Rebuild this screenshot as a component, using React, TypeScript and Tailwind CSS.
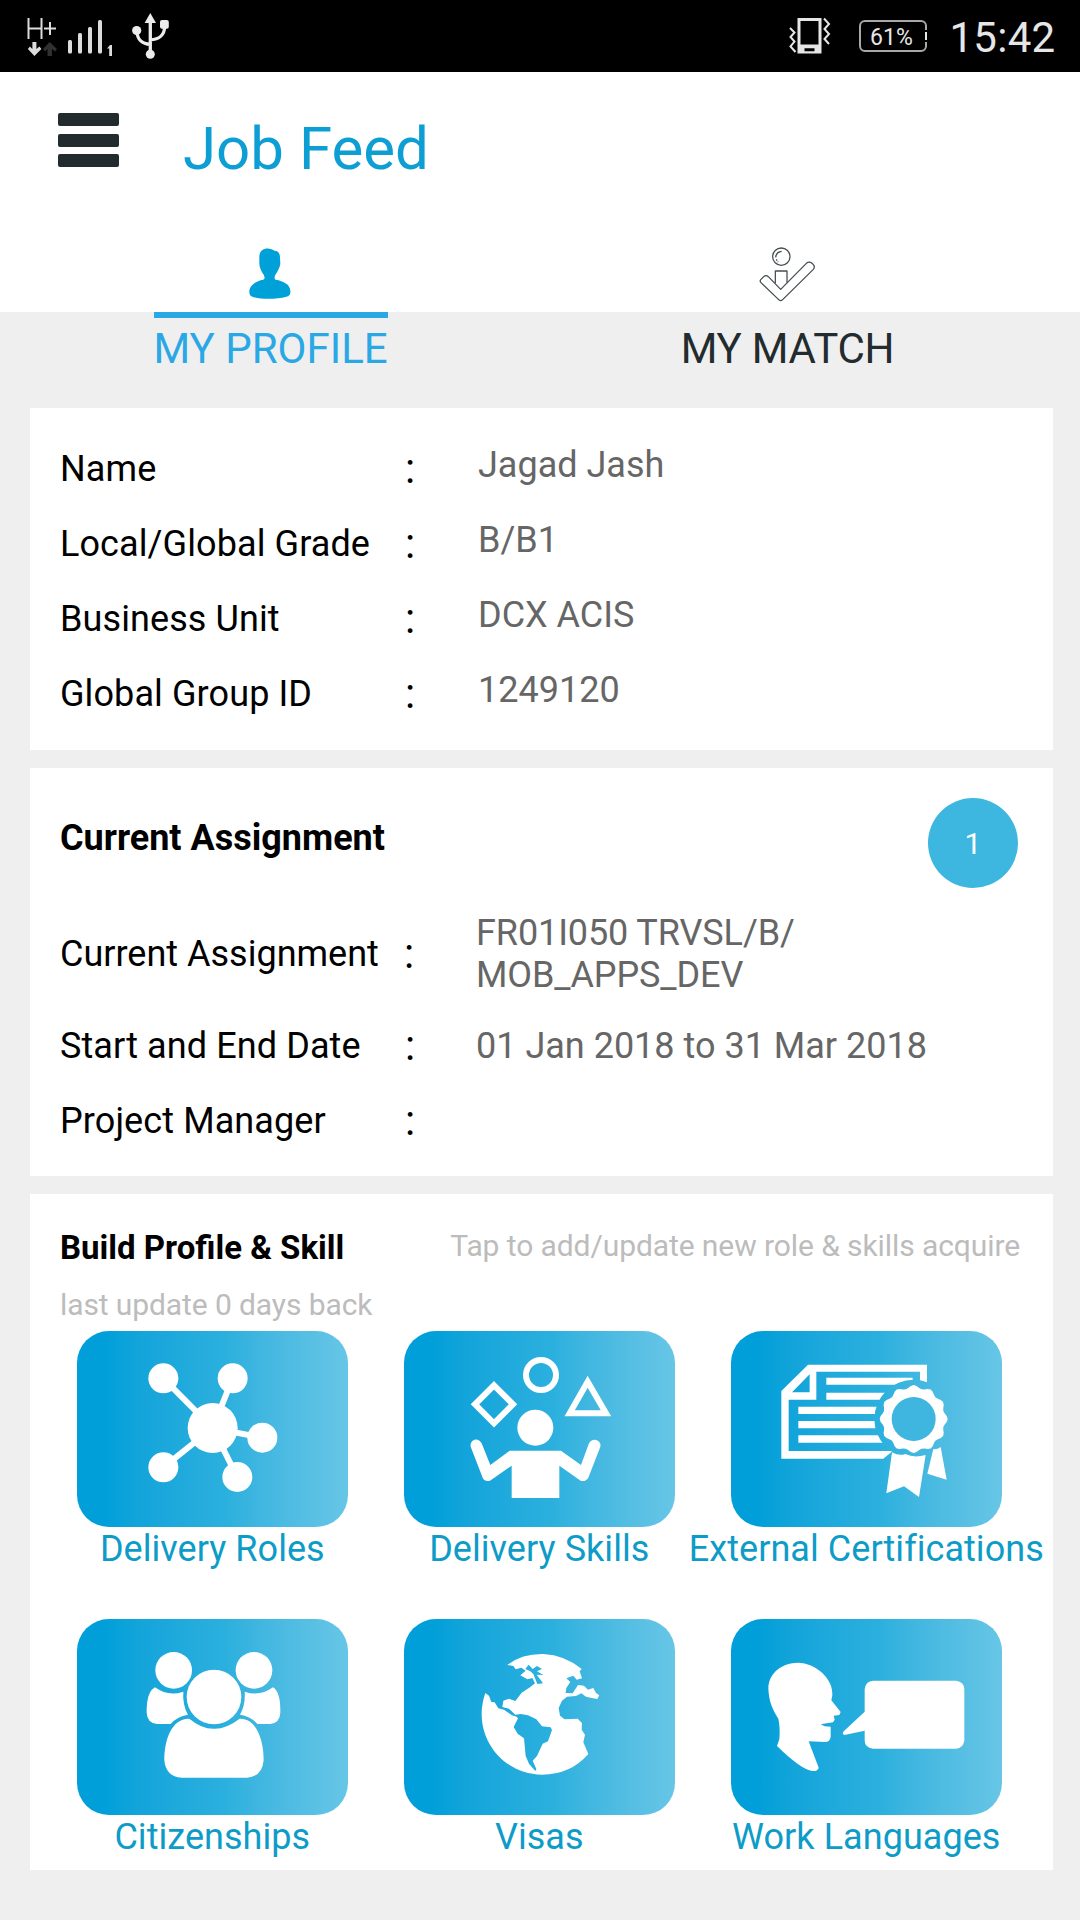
import type { ReactNode } from 'react';

const profile = [
    { label: 'Name', value: 'Jagad Jash' },
    { label: 'Local/Global Grade', value: 'B/B1' },
    { label: 'Business Unit', value: 'DCX ACIS' },
    { label: 'Global Group ID', value: '1249120' },
];

function StatusBar() {
    return (
        <div className="flex h-[72px] items-center bg-black text-[#e6e6e6]">
            <svg width="180" height="72" viewBox="0 0 180 72" fill="#dcdcdc">
                {/* network type */}
                <g stroke="#dcdcdc" strokeWidth="2" fill="none">
                    <path d="M28.5 18v21M41.5 18v21M28.5 28.500h13M44 28.500h12M50 22v13" />
                </g>
                <path d="M32.400 42h4v7l3-2.500 2 2.500-7 7-6.500-7 2-2.500 2.500 2.500z" />
                <path d="M47.500 56h4.500v-7l3 2.500 2-2.500-7.300-7-6.700 7 2 2.500 2.500-2.500z" fill="#303030" />
                <rect x="68" y="40" width="4" height="13.500" rx="1.500" />
                <rect x="78" y="33" width="4" height="20.500" rx="1.500" />
                <rect x="88" y="27" width="4" height="26.500" rx="1.500" />
                <rect x="98" y="20" width="4" height="33.500" rx="1.500" />
                <path d="M107 48.500l3-3.500h2v11h-2.800v-7.500z" />
                {/* usb */}
                <g fill="#ececec">
                    <path d="M150.300 13l5.700 10h-11.400z" />
                    <circle cx="136.700" cy="30.500" r="4.600" />
                    <rect x="160" y="20" width="8.800" height="8.800" rx="2" />
                    <circle cx="150.300" cy="54.200" r="4.500" />
                    <path
                        d="M150.300 20v34M137 31c0 8 5 13 13.300 13.300M164.500 27c0 7.500-5 12.500-14.200 12.800"
                        fill="none"
                        stroke="#ececec"
                        strokeWidth="3.300"
                    />
                </g>
            </svg>
            <div className="flex-1" />
            {/* vibrate */}
            <svg width="42" height="38" viewBox="0 0 42 38" className="mr-[28px]" fill="none" stroke="#e6e6e6">
                <path d="M8.500 1h24v35.500h-24z" fill="#e6e6e6" stroke="none" />
                <path d="M11.500 4h18v23.500h-18zM15.500 31.200h10v3h-10z" fill="#000" stroke="none" />
                <path d="M1 11l4.500 4.500-4 4.500 4 4.500-4 5 5 5.500" strokeWidth="2" />
                <path d="M35 1.500l5 5.500-4.500 5 4.500 5-4.500 5 4.500 5" strokeWidth="2" />
            </svg>
            <div className="relative mr-[22px] flex h-[32px] w-[68px] items-center justify-center rounded-[6px] border-2 border-[#a8a8a8] pr-[4px] pt-[3px] text-[23px] leading-none">
                61%
                <span className="absolute right-[-2px] top-[8px] h-[12px] w-[2px] border-y-2 border-black bg-[#e6e6e6]" />
            </div>
            <span className="pr-[24.5px] pt-[4px] text-[42px] leading-none tracking-[0.3px]">15:42</span>
        </div>
    );
}

function UserIcon() {
    return (
        <svg width="42" height="51" viewBox="356 55 126 153" fill="#00a0d8">
            <path d="M387 80C388 62 402 55 416 57C424 58 428 60 432 63C443 63 449 70 449 84L450 103C448 115 441 126 435 136C432 142 432 148 436 150C460 154 479 164 480 183C481 196 476 199 468 201C440 209 396 210 368 202C360 199 357 196 357 185C358 166 378 154 398 150C404 148 404 143 400 135C393 125 388 115 387 103z" />
        </svg>
    );
}

function MatchIcon() {
    return (
        <svg width="57" height="55" viewBox="298 50 171 165" fill="none" stroke="#454d50" strokeWidth="3.8" strokeLinejoin="round">
            <circle cx="365" cy="79" r="26" />
            <path d="M348 81C349 70 355 64 366 63M350 87l2 4M354 94l2 1" strokeWidth="4" />
            <path d="M347 158V122H382V157" />
            <path d="M304 147L312 139Q319 133 326 139L363 177L440 99Q448 92 456 98L461 103Q467 110 461 117L369 208Q363 214 357 208L304 157Q299 152 304 147z" />
        </svg>
    );
}

function Row({ label, value, raised }: { label: string; value: string; raised?: boolean }) {
    return (
        <div className="flex h-[75px] items-center">
            <span className="w-[345px] tracking-[0.1px] text-black">{label}</span>
            <span className="w-[71px] text-[42px] leading-[48px] text-black">:</span>
            <span className={raised ? 'pb-2 pl-[2px] text-[#666]' : 'text-[#666]'}>{value}</span>
        </div>
    );
}

function Tile({ label, origin, children }: { label: string; origin: string; children: ReactNode }) {
    return (
        <div className="flex h-[288px] flex-col items-center">
            <div className="h-[196px] w-[271px] rounded-[32px] bg-linear-to-r from-[#009fd9] from-10% via-[#2bb0de] via-55% to-[#67c6e6]">
                <svg width="271" height="196" viewBox={origin} fill="#fff">
                    {children}
                </svg>
            </div>
            <span className="whitespace-nowrap pr-px text-[36px] leading-[44px] tracking-[0.05px] text-[#0d9cc8]">{label}</span>
        </div>
    );
}

function Ribbon() {
    // scalloped edge of the award badge
    const points = Array.from({ length: 72 }, (_, i) => {
        const a = (i * Math.PI) / 36;
        const r = 97 + 5 * Math.cos(a * 12);
        return `${(703 + r * Math.cos(a)).toFixed(1)},${(326 + r * Math.sin(a)).toFixed(1)}`;
    }).join(' ');
    return (
        <>
            <defs>
                <mask id="badge" maskUnits="userSpaceOnUse" x="155" y="62" width="813" height="588">
                    <rect x="155" y="62" width="813" height="588" fill="#fff" />
                    <circle cx="703" cy="326" r="118" fill="#000" />
                </mask>
            </defs>
            <g mask="url(#badge)">
                <path d="M306 242L386 163H743V330H722V184H411V268H328V422H640L612 445H306zM338 246H391V192z" fillRule="evenodd" />
                <path d="M441 202H700V223H441zM441 247H660V268H441zM357 289H640V311H357zM357 332H640V354H357zM357 375H640V397H357z" />
            </g>
            <path d="M638 426Q660 438 678 431Q704 444 739 434L719 560L674 528L621 549zM762 416Q776 418 784 410L802 508L744 490z" />
            <polygon points={points} />
            <circle cx="703" cy="326" r="66" fill="#3fb6e0" />
        </>
    );
}

export default function App() {
    return (
        <div className="h-[1920px] w-[1080px] overflow-hidden bg-[#efefef] font-['Roboto',sans-serif] text-[36px] leading-[42px]">
            <StatusBar />

            <header className="flex h-[240px] flex-col justify-between bg-white">
                <div className="flex pl-[58px] pt-[41px]">
                    <div className="flex h-[54px] w-[61px] flex-col justify-between">
                        <div className="h-[13px] rounded-[2px] bg-[#222b2e]" />
                        <div className="h-[13px] rounded-[2px] bg-[#222b2e]" />
                        <div className="h-[13px] rounded-[2px] bg-[#222b2e]" />
                    </div>
                    <h1 className="pl-[64px] pt-px text-[60px] leading-[70px] text-[#0d9fd3]">Job Feed</h1>
                </div>
                <div className="flex items-end pl-[12px]">
                    <div className="flex w-[517px] justify-center pb-[13px] pr-[2px]">
                        <UserIcon />
                    </div>
                    <div className="flex w-[517px] justify-center pb-[10px]">
                        <MatchIcon />
                    </div>
                </div>
            </header>

            <nav className="flex h-[96px] pl-[12px] text-[42px] leading-[62px]">
                <div className="flex w-[517px] justify-center">
                    <span className="h-[70px] w-[234px] whitespace-nowrap border-t-[6px] border-[#2aa8e6] text-center text-[#2aa8e6]">MY PROFILE</span>
                </div>
                <div className="flex w-[517px] justify-center pt-[6px] tracking-[-0.2px] text-[#222b2e]">MY MATCH</div>
            </nav>

            <main className="flex w-[1053px] flex-col pl-[30px]">
                {/* Profile */}
                <section className="h-[342px] bg-white pl-[30px] pt-[23px]">
                    {profile.map((item) => (
                        <Row key={item.label} label={item.label} value={item.value} raised />
                    ))}
                </section>

                {/* Current Assignment */}
                <section className="mt-[18px] h-[408px] bg-white pl-[30px]">
                    <div className="flex h-[133px] justify-between pr-[35px] pt-[30px]">
                        <h2 className="pt-[19px] font-bold">Current Assignment</h2>
                        <span className="flex size-[90px] items-center justify-center rounded-full bg-[#3db7e0] pt-px text-[30px] text-white">1</span>
                    </div>
                    <div className="flex h-[107px] items-center pb-px">
                        <span className="w-[344px] text-black">Current Assignment</span>
                        <span className="w-[72px] text-[42px] leading-[48px] text-black">:</span>
                        <span className="w-[420px] tracking-[-0.1px] text-[#666]">
                            FR01I050 TRVSL/B/
                            <br />
                            MOB_APPS_DEV
                        </span>
                    </div>
                    <Row label="Start and End Date" value="01 Jan 2018 to 31 Mar 2018" />
                    <Row label="Project Manager" value="" />
                </section>

                {/* Build Profile & Skill */}
                <section className="mt-[18px] h-[676px] bg-white">
                    <div className="flex justify-between pl-[30px] pr-[33px] pt-[33px]">
                        <h2 className="text-[33px] font-bold">Build Profile &amp; Skill</h2>
                        <span className="mt-[-2px] text-[30px] tracking-[-0.09px] text-[#bcbcbc]">Tap to add/update new role &amp; skills acquire</span>
                    </div>
                    <p className="pl-[30px] pt-[15px] text-[30px] tracking-[-0.1px] text-[#bcbcbc]">last update 0 days back</p>

                    <div className="ml-[19.3px] grid w-[981px] grid-cols-3 pt-[5px]">
                        <Tile label="Delivery Roles" origin="52 62 813 588">
                            <g stroke="#fff" strokeWidth="18">
                                <path d="M459 353L311 204M459 353L519 204M459 353L608 382M459 353L533 500M459 353L311 471" />
                            </g>
                            <circle cx="459" cy="353" r="75" />
                            <circle cx="311" cy="204" r="45" />
                            <circle cx="519" cy="204" r="45" />
                            <circle cx="608" cy="382" r="45" />
                            <circle cx="533" cy="500" r="45" />
                            <circle cx="311" cy="471" r="45" />
                        </Tile>
                        <Tile label="Delivery Skills" origin="44 62 813 588">
                            <g fill="none" stroke="#fff" strokeWidth="18">
                                <circle cx="455" cy="194" r="45" />
                                <path d="M314 225L371 282L314 339L257 282z" />
                                <path d="M595 214L650 309H541z" />
                            </g>
                            <circle cx="438" cy="352" r="54" />
                            <path d="M361 421H515L575 464L599 399Q607 385 621 389Q636 395 633 409L597 502Q588 516 574 511L510 466V563H367V466L302 511Q286 515 280 502L244 409Q242 393 255 388Q269 385 277 399L303 464z" />
                        </Tile>
                        <Tile label="External Certifications" origin="155 62 813 588">
                            <Ribbon />
                        </Tile>
                        <Tile label="Citizenships" origin="52 57 813 588">
                            <circle cx="342" cy="211" r="55" />
                            <circle cx="583" cy="211" r="55" />
                            <circle cx="463" cy="291" r="82" />
                            <path d="M286 262Q326 291 371 275Q368 314 385 344Q352 349 333 372H292Q262 368 261 338Q260 276 286 262z" />
                            <path d="M640 262Q600 291 555 275Q558 314 541 344Q574 349 593 372H632Q661 368 662 338Q663 276 640 262z" />
                            <path d="M389 356Q426 387 463 386Q500 387 540 356C590 354 612 420 612 480Q608 530 562 533H366Q318 530 314 480C314 420 336 354 389 356z" />
                        </Tile>
                        <Tile label="Visas" origin="44 57 813 588">
                            <path d="M354 195Q397 161 462 162Q526 165 577 207L571 214L578 235L562 239L552 227L531 235L543 246L531 264L529 279L550 280L566 255L584 257L596 269L612 264L620 279L630 286L624 297L604 293L590 290L576 280L560 288L533 290L518 302L508 324L512 347L526 358L565 356L578 369L577 389L587 404L582 427L597 462Q543 524 458 524C355 523 277 440 277 342Q277 310 288 279L299 287L306 306L316 307L327 325L344 329L368 346L382 350L386 355L373 381L385 401L404 415L409 468L419 491L438 513L441 507L430 482L443 468L460 431L476 424L488 390L484 382L458 379L441 358L416 346L394 342L378 344L359 326L339 321L342 302L359 296L378 303L397 278L423 261L437 250L429 234L414 238L393 226L409 212L396 203L379 208L372 198z" />
                            <path d="M408 207L418 194L430 207L443 198L458 207L443 214L462 225L442 224L461 250L444 252L432 222L423 214z" fill="#2bb0de" />
                        </Tile>
                        <Tile label="Work Languages" origin="155 57 813 588">
                            <path d="M267 264C269 216 310 189 356 188C408 189 463 235 459 286L456 301L484 336L480 345L463 347L466 359L461 367L424 373L436 379L454 380V410Q452 426 437 426L388 424L418 503Q416 514 399 513Q364 508 293 438L300 418Q303 384 297 356C279 329 268 302 267 264z" />
                            <path d="M581 242H830Q855 245 855 268V421Q852 445 830 446H581Q556 443 556 421V392L495 405Q486 401 494 393L556 335V268Q559 243 581 242z" />
                        </Tile>
                    </div>
                </section>
            </main>
        </div>
    );
}
